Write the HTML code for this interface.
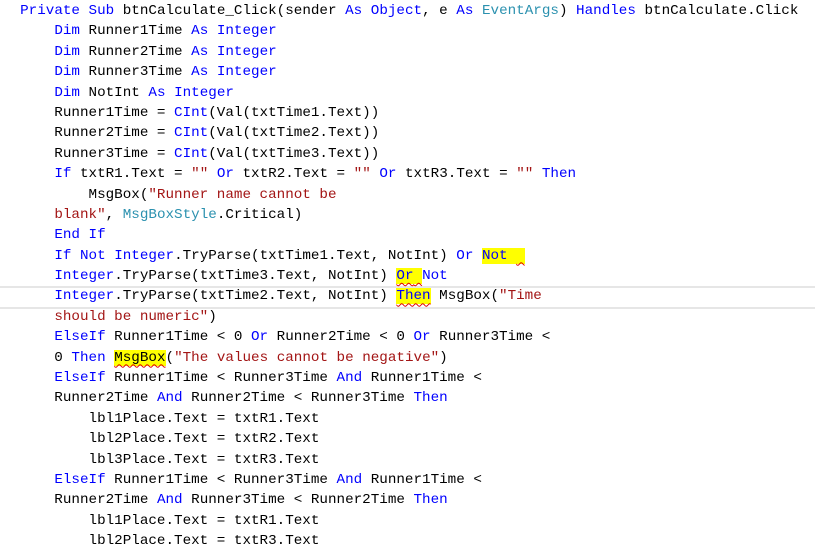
<!DOCTYPE html>
<html><head><style>
body{margin:0;background:#fff;width:815px;height:554px;overflow:hidden;position:relative}
.c{position:absolute;top:1px;left:3px;font-family:"Liberation Mono",monospace;font-size:14.25px;color:#000}
.l{height:20.4px;line-height:20.4px;white-space:pre}
.k{color:#0000ff}.t{color:#2b91af}.s{color:#a31515}
.h{background:#ffff00}
.w{text-decoration:underline wavy #e00000;text-decoration-thickness:1px;text-underline-offset:3px}
.cur{position:absolute;left:0;top:286px;width:815px;height:19px;border-top:2px solid #e6e6e6;border-bottom:2px solid #e6e6e6}
</style></head><body>
<div class="cur"></div>
<div class="c"><div class="l">  <span class="k">Private</span> <span class="k">Sub</span> btnCalculate_Click(sender <span class="k">As</span> <span class="k">Object</span>, e <span class="k">As</span> <span class="t">EventArgs</span>) <span class="k">Handles</span> btnCalculate.Click</div><div class="l">      <span class="k">Dim</span> Runner1Time <span class="k">As</span> <span class="k">Integer</span></div><div class="l">      <span class="k">Dim</span> Runner2Time <span class="k">As</span> <span class="k">Integer</span></div><div class="l">      <span class="k">Dim</span> Runner3Time <span class="k">As</span> <span class="k">Integer</span></div><div class="l">      <span class="k">Dim</span> NotInt <span class="k">As</span> <span class="k">Integer</span></div><div class="l">      Runner1Time = <span class="k">CInt</span>(Val(txtTime1.Text))</div><div class="l">      Runner2Time = <span class="k">CInt</span>(Val(txtTime2.Text))</div><div class="l">      Runner3Time = <span class="k">CInt</span>(Val(txtTime3.Text))</div><div class="l">      <span class="k">If</span> txtR1.Text = <span class="s">""</span> <span class="k">Or</span> txtR2.Text = <span class="s">""</span> <span class="k">Or</span> txtR3.Text = <span class="s">""</span> <span class="k">Then</span></div><div class="l">          MsgBox(<span class="s">"Runner name cannot be</span></div><div class="l">      <span class="s">blank"</span>, <span class="t">MsgBoxStyle</span>.Critical)</div><div class="l">      <span class="k">End</span> <span class="k">If</span></div><div class="l">      <span class="k">If</span> <span class="k">Not</span> <span class="k">Integer</span>.TryParse(txtTime1.Text, NotInt) <span class="k">Or</span> <span class="h"><span class="k">Not</span> <span class="w"> </span></span></div><div class="l">      <span class="k">Integer</span>.TryParse(txtTime3.Text, NotInt) <span class="h w"><span class="k">Or</span> </span><span class="k">Not</span></div><div class="l">      <span class="k">Integer</span>.TryParse(txtTime2.Text, NotInt) <span class="h w"><span class="k">Then</span></span> MsgBox(<span class="s">"Time</span></div><div class="l">      <span class="s">should be numeric"</span>)</div><div class="l">      <span class="k">ElseIf</span> Runner1Time &lt; 0 <span class="k">Or</span> Runner2Time &lt; 0 <span class="k">Or</span> Runner3Time &lt;</div><div class="l">      0 <span class="k">Then</span> <span class="h w">MsgBox</span>(<span class="s">"The values cannot be negative"</span>)</div><div class="l">      <span class="k">ElseIf</span> Runner1Time &lt; Runner3Time <span class="k">And</span> Runner1Time &lt;</div><div class="l">      Runner2Time <span class="k">And</span> Runner2Time &lt; Runner3Time <span class="k">Then</span></div><div class="l">          lbl1Place.Text = txtR1.Text</div><div class="l">          lbl2Place.Text = txtR2.Text</div><div class="l">          lbl3Place.Text = txtR3.Text</div><div class="l">      <span class="k">ElseIf</span> Runner1Time &lt; Runner3Time <span class="k">And</span> Runner1Time &lt;</div><div class="l">      Runner2Time <span class="k">And</span> Runner3Time &lt; Runner2Time <span class="k">Then</span></div><div class="l">          lbl1Place.Text = txtR1.Text</div><div class="l">          lbl2Place.Text = txtR3.Text</div></div>
</body></html>
